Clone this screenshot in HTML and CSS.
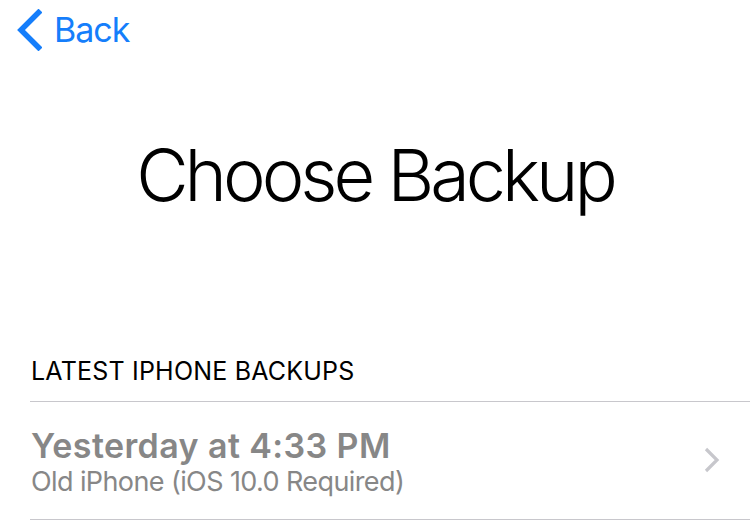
FILE: index.html
```html
<!DOCTYPE html>
<html lang="en">
<head>
<meta charset="utf-8">
<title>Choose Backup</title>
<link rel="stylesheet" href="styles.css">
</head>
<body>
<div class="screen">
  <nav class="nav">
    <a class="back" href="#">
      <svg class="back-icon" width="26" height="42" viewBox="0 0 26 42" aria-hidden="true">
        <polyline points="22.5,3.5 5,21 22.5,38.5" fill="none" stroke="#157efb" stroke-width="5.5" stroke-linecap="square" stroke-linejoin="miter"/>
      </svg>
      <span class="back-label">Back</span>
    </a>
  </nav>
  <h1 class="title">Choose Backup</h1>
  <section class="group">
    <h2 class="group-header">LATEST IPHONE BACKUPS</h2>
    <ul class="list">
      <li class="row">
        <div class="row-text">
          <div class="row-title">Yesterday at 4:33 PM</div>
          <div class="row-sub">Old iPhone (iOS 10.0 Required)</div>
        </div>
        <svg class="chevron" width="18" height="28" viewBox="0 0 18 28" aria-hidden="true">
          <polyline points="3,3 14,14 3,25" fill="none" stroke="#c7c7cc" stroke-width="3.2"/>
        </svg>
      </li>
    </ul>
  </section>
</div>
</body>
</html>
```
FILE: styles.css
```css
html, body {
  margin: 0;
  padding: 0;
  background: #ffffff;
}
body {
  font-family: Inter, "Noto Sans", sans-serif;
  color: #000;
  width: 750px;
  height: 526px;
  overflow: hidden;
}
.screen {
  display: flex;
  flex-direction: column;
}
.nav {
  display: flex;
  align-items: center;
  padding: 9px 0 0 16px;
  height: 42px;
}
.back {
  display: flex;
  align-items: center;
  gap: 12px;
  text-decoration: none;
  color: #157efb;
}
.back-icon {
  display: block;
}
.back-label {
  font-size: 34px;
  line-height: 34px;
  font-weight: 400;
  letter-spacing: -1px;
}
.title {
  margin: 87px 0 0;
  padding-left: 0;
  text-align: center;
  font-size: 72px;
  line-height: 73px;
  font-weight: 300;
  letter-spacing: -4px;
}
.group {
  margin-top: 148px;
  padding-left: 31px;
}
.group-header {
  margin: 0;
  font-size: 25px;
  line-height: 25px;
  font-weight: 400;
  letter-spacing: 0.2px;
}
.list {
  list-style: none;
  margin: 17px 0 0;
  padding: 0;
  border-top: 1px solid #c8c7cc;
  border-bottom: 1px solid #c8c7cc;
  margin-left: -1px;
}
.row {
  display: flex;
  align-items: center;
  justify-content: space-between;
  padding: 3px 29px 0 1px;
  height: 114px;
}
.row-text {
  display: flex;
  flex-direction: column;
  gap: 5px;
}
.row-title {
  font-size: 34px;
  line-height: 34px;
  font-weight: 600;
  color: #878787;
  letter-spacing: 0.4px;
}
.row-sub {
  font-size: 27px;
  line-height: 27px;
  color: #878787;
  letter-spacing: -0.6px;
}
.chevron {
  display: block;
  margin-top: -5px;
}
```
